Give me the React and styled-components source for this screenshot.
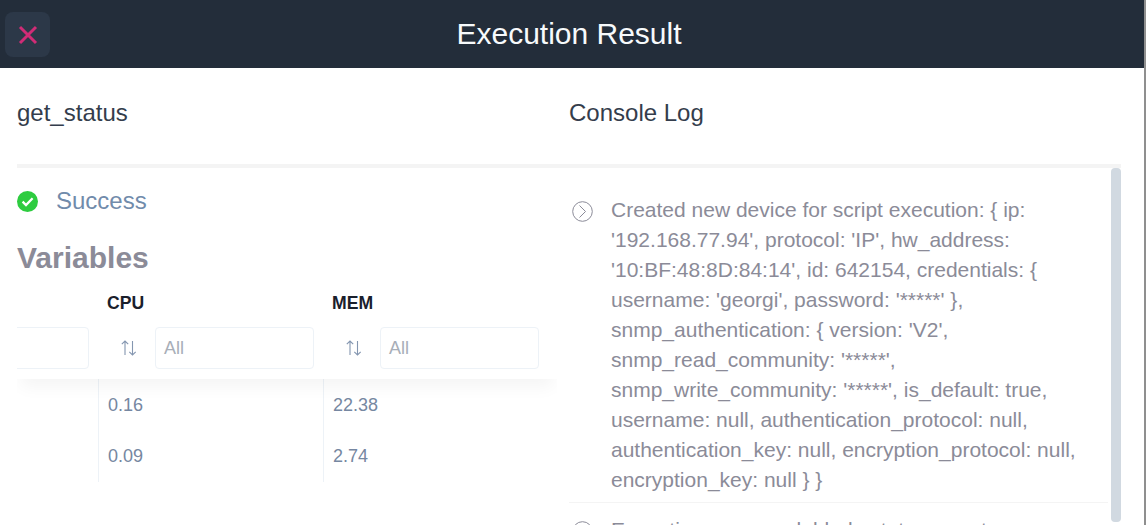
import React from 'react'
import styled, { createGlobalStyle } from 'styled-components'

const GlobalStyle = createGlobalStyle`
  html, body {
    margin: 0;
    padding: 0;
    height: 100%;
    overflow: hidden;
    background: #fff;
    font-family: "Liberation Sans", Arial, sans-serif;
  }
  * { box-sizing: border-box; }
`

const Page = styled.div`
  width: 1146px;
  height: 525px;
  display: flex;
  flex-direction: column;
  overflow: hidden;
  border-right: 2px solid #8f8f8f;
`

const Header = styled.header`
  position: relative;
  flex: none;
  height: 68px;
  padding-right: 6px;
  background: #232d3a;
  color: #f7fafc;
  display: flex;
  align-items: center;
  justify-content: center;
  font-size: 30px;
`

const CloseButton = styled.button`
  position: absolute;
  left: 5px;
  top: 12px;
  width: 45px;
  height: 45px;
  padding: 0;
  border: 0;
  border-radius: 8px;
  background: #2c3848;
  display: flex;
  align-items: center;
  justify-content: center;
`

const Body = styled.div`
  flex: 1;
  min-height: 0;
  display: grid;
  grid-template-columns: 552px 552px;
  padding-left: 17px;
`

const Column = styled.section`
  display: flex;
  flex-direction: column;
  min-width: 0;
  min-height: 0;
`

const ColumnTitle = styled.h2`
  flex: none;
  margin: 0;
  height: 100px;
  padding-top: 32px;
  font-size: 24px;
  line-height: 26px;
  font-weight: 400;
  color: #343d4c;
  border-bottom: 4px solid #f4f4f4;
`

const Status = styled.div`
  display: flex;
  align-items: center;
  gap: 18px;
  margin-top: 19px;
  font-size: 24px;
  line-height: 28px;
  color: #718bab;
`

const Heading = styled.h3`
  margin: 25px 0 0;
  font-size: 30px;
  line-height: 36px;
  font-weight: 700;
  color: #8b8b98;
`

const Table = styled.div`
  margin-top: 12px;
  width: 540px;
  overflow: hidden;
`

const HeadRow = styled.div`
  position: relative;
  display: grid;
  grid-template-columns: 81px 225px 225px;
  height: 91px;
  box-shadow: 0 12px 16px -4px rgba(0, 0, 0, 0.045);
`

const HeadCell = styled.div`
  padding: 0 9px 0 ${p => (p.$first ? 0 : 9)}px;
  display: flex;
  flex-direction: column;
`

const HeadLabel = styled.div`
  height: 39px;
  padding-top: 6px;
  font-size: 17.6px;
  line-height: 18px;
  font-weight: 700;
  color: #1a202c;
`

const FilterRow = styled.div`
  display: flex;
  align-items: center;
  justify-content: flex-end;
`

const SortIcon = styled.svg`
  flex: none;
  width: 20px;
  height: 20px;
  margin: 0 16px 0 3px;
`

const FilterBox = styled.div`
  width: ${p => (p.$first ? '100px' : '159px')};
  height: 42px;
  padding: 0 8px;
  border: 1px solid #edf2f7;
  border-radius: 4px;
  font-size: 18px;
  line-height: 40px;
  color: #a8aeb8;
  flex: none;
`

const DataRow = styled.div`
  display: grid;
  grid-template-columns: 81px 225px 225px;
  height: ${p => p.$h}px;
`

const DataCell = styled.div`
  border-left: ${p => (p.$first ? 0 : '1px solid #edf2f7')};
  padding: 15px 0 0 9px;
  font-size: 18px;
  line-height: 22px;
  color: #7687a1;
`

const LogList = styled.div`
  position: relative;
  flex: 1;
  min-height: 0;
  padding-top: 15px;
  overflow: hidden;
`

const LogEntry = styled.div`
  display: flex;
  width: 539px;
  padding: 12px 0 7px 3px;
  font-size: 21px;
  line-height: 30px;
  color: #8b8b98;
  border-bottom: ${p => (p.$last ? 0 : '1px solid #f4f4f4')};
`

const LogIcon = styled.svg`
  flex: none;
  width: 21px;
  height: 21px;
  margin: 6px 18px 0 0;
`

const LogText = styled.div`
  min-width: 0;
`

const ScrollThumb = styled.div`
  position: absolute;
  top: 0;
  left: 542px;
  width: 10px;
  height: 354px;
  background: #d1d9e1;
  border-radius: 4px;
`

const rows = [
  { id: 1, cpu: '0.16', mem: '22.38', h: 51 },
  { id: 2, cpu: '0.09', mem: '2.74', h: 52 },
]

const logs = [
  `Created new device for script execution: { ip: '192.168.77.94', protocol: 'IP', hw_address: '10:BF:48:8D:84:14', id: 642154, credentials: { username: 'georgi', password: '*****' }, snmp_authentication: { version: 'V2', snmp_read_community: '*****', snmp_write_community: '*****', is_default: true, username: null, authentication_protocol: null, authentication_key: null, encryption_protocol: null, encryption_key: null } }`,
  'Execution command: blade status report',
]

function Sort() {
  return (
    <SortIcon viewBox="0 0 20 20" fill="none" stroke="#8496b0" strokeWidth="1.1">
      <path d="M6 17V3M2.8 6.2 6 3l3.2 3.2M13.5 3v14M10.3 13.8l3.2 3.2 3.2-3.2" />
    </SortIcon>
  )
}

export default function App() {
  return (
    <Page>
      <GlobalStyle />
      <Header>
        <CloseButton aria-label="Close">
          <svg width="20" height="20" viewBox="0 0 20 20" fill="none" stroke="#d02c76" strokeWidth="3">
            <path d="M2 2l16 16M18 2 2 18" />
          </svg>
        </CloseButton>
        Execution Result
      </Header>
      <Body>
        <Column>
          <ColumnTitle>get_status</ColumnTitle>
          <Status>
            <svg width="21" height="21" viewBox="0 0 21 21">
              <circle cx="10.5" cy="10.5" r="10.5" fill="#2ecc40" />
              <path d="M5.6 10.6l3.4 3.4 6.6-6.8" fill="none" stroke="#fff" strokeWidth="2.3" />
            </svg>
            Success
          </Status>
          <Heading>Variables</Heading>
          <Table>
            <HeadRow>
              <HeadCell $first>
                <HeadLabel />
                <FilterRow><FilterBox $first /></FilterRow>
              </HeadCell>
              <HeadCell>
                <HeadLabel>CPU</HeadLabel>
                <FilterRow><Sort /><FilterBox>All</FilterBox></FilterRow>
              </HeadCell>
              <HeadCell>
                <HeadLabel>MEM</HeadLabel>
                <FilterRow><Sort /><FilterBox>All</FilterBox></FilterRow>
              </HeadCell>
            </HeadRow>
            {rows.map(r => (
              <DataRow key={r.id} $h={r.h}>
                <DataCell $first />
                <DataCell>{r.cpu}</DataCell>
                <DataCell>{r.mem}</DataCell>
              </DataRow>
            ))}
          </Table>
        </Column>
        <Column>
          <ColumnTitle>Console Log</ColumnTitle>
          <LogList>
            {logs.map((text, i) => (
              <LogEntry key={i} $last={i === logs.length - 1}>
                <LogIcon viewBox="0 0 21 21" fill="none" stroke="#8b8b98" strokeWidth="1">
                  <circle cx="10.5" cy="10.5" r="9.8" />
                  <path d="M7.5 4.5l6 6-6 6" />
                </LogIcon>
                <LogText>{text}</LogText>
              </LogEntry>
            ))}
            <ScrollThumb />
          </LogList>
        </Column>
      </Body>
    </Page>
  )
}
